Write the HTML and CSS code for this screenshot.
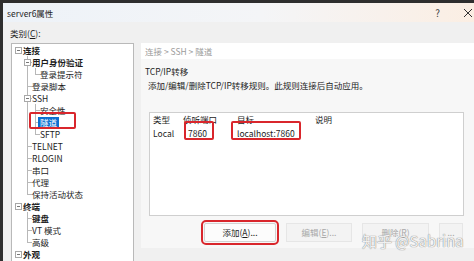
FILE: index.html
```html
<!DOCTYPE html>
<html lang="zh-CN">
<head>
  <meta charset="UTF-8">
  <title>server6属性</title>
  <link rel="stylesheet" href="styles.css">
</head>
<body>
  <div class="dialog">
    <div class="titlebar">
      <span class="title">server6属性</span>
      <span class="help">?</span>
      <span class="close">
        <svg width="10" height="10" viewBox="0 0 10 10"><path d="M1 1L9 9M9 1L1 9" stroke="#333" stroke-width="1" fill="none"/></svg>
      </span>
    </div>

    <div class="main">
      <div class="label">类别(<u>C</u>):</div>

      <div class="tree">
        <div class="row bold"><i class="c0 box"></i><span>连接</span></div>
        <div class="row bold"><i class="c0"></i><i class="c1 t box"></i><span>用户身份验证</span></div>
        <div class="row"><i class="c0"></i><i class="c1 v"></i><i class="c2 l"></i><span>登录提示符</span></div>
        <div class="row"><i class="c0"></i><i class="c1 t"></i><span>登录脚本</span></div>
        <div class="row"><i class="c0"></i><i class="c1 t box"></i><span>SSH</span></div>
        <div class="row"><i class="c0"></i><i class="c1 v"></i><i class="c2 t"></i><span>安全性</span></div>
        <div class="row"><i class="c0"></i><i class="c1 v"></i><i class="c2 t"></i><span class="sel mark-node">隧道</span></div>
        <div class="row"><i class="c0"></i><i class="c1 v"></i><i class="c2 l"></i><span>SFTP</span></div>
        <div class="row"><i class="c0"></i><i class="c1 t"></i><span>TELNET</span></div>
        <div class="row"><i class="c0"></i><i class="c1 t"></i><span>RLOGIN</span></div>
        <div class="row"><i class="c0"></i><i class="c1 t"></i><span>串口</span></div>
        <div class="row"><i class="c0"></i><i class="c1 t"></i><span>代理</span></div>
        <div class="row"><i class="c0"></i><i class="c1 l"></i><span>保持活动状态</span></div>
        <div class="row bold"><i class="c0 box"></i><span>终端</span></div>
        <div class="row bold"><i class="c0"></i><i class="c1 t"></i><span>键盘</span></div>
        <div class="row"><i class="c0"></i><i class="c1 t"></i><span>VT 模式</span></div>
        <div class="row"><i class="c0"></i><i class="c1 l"></i><span>高级</span></div>
        <div class="row bold"><i class="c0 box"></i><span>外观</span></div>
      </div>

      <div class="panel">
        <div class="crumb">连接 &gt; SSH &gt; 隧道</div>
        <div class="sec-title">TCP/IP转移</div>
        <div class="desc">添加/编辑/删除TCP/IP转移规则。此规则连接后自动应用。</div>

        <div class="list">
          <div class="list-row">
            <span>类型</span><span>侦听端口</span><span>目标</span><span>说明</span>
          </div>
          <div class="list-row data">
            <span>Local</span>
            <span class="port"><span class="mark mark-port">7860</span></span>
            <span><span class="mark mark-dest">localhost:7860</span></span>
            <span></span>
          </div>
        </div>

        <div class="buttons">
          <button class="btn mark-btn" style="width:72px">添加(<u>A</u>)...</button>
          <button class="btn off" style="width:66px">编辑(<u>E</u>)...</button>
          <button class="btn off" style="width:67px">删除(<u>R</u>)</button>
          <button class="btn off" style="width:24px">...</button>
        </div>
      </div>
    </div>

    <div class="watermark">知乎 @Sabrina</div>
  </div>
</body>
</html>
```

FILE: styles.css
```css
html, body {
  margin: 0;
  height: 100%;
  overflow: hidden;
}
body {
  background-color: #2e2e2e;
  font-family: "Noto Sans CJK SC", "Noto Sans", sans-serif;
  font-size: 8.5px;
  color: #1c1c1c;
}
.dialog {
  margin: 3px 0 0 3px;
  height: 258px;
  background-color: #f0f0f0;
  position: relative;
  overflow: hidden;
}

/* title bar */
.titlebar {
  height: 19px;
  display: flex;
  align-items: center;
  padding: 0 1px 0 4px;
  background: linear-gradient(90deg, #edf2f8 0%, #f4f5f7 55%, #fbeee3 100%);
}
.help {
  margin-left: auto;
  font-size: 10px;
  color: #444;
}
.close {
  margin-left: 23px;
  display: flex;
}

/* layout */
.main {
  display: grid;
  grid-template-columns: 123px 1fr;
  grid-template-rows: 21px auto;
  column-gap: 7px;
  padding-left: 8px;
}
.label {
  grid-column: 1 / 3;
  padding-top: 5px;
  margin-left: -1px;
  line-height: 12px;
}

/* tree */
.tree {
  --ln: #b8b8b8;
  background-color: #fff;
  border: 1px solid #b9b9b9;
  height: 240px;
}
.row {
  display: flex;
  height: 12px;
  line-height: 12px;
  white-space: nowrap;
}
.row.bold span {
  font-weight: bold;
}
.row i {
  display: block;
  flex: none;
  height: 12px;
}
.c0 { width: 11px; --x: 6px; }
.c1 { width: 9px; --x: 4px; }
.c2 { width: 8px; --x: 3px; }
.v {
  background: linear-gradient(var(--ln), var(--ln)) var(--x) 0 / 1px 100% no-repeat;
}
.t {
  background:
    linear-gradient(var(--ln), var(--ln)) var(--x) 0 / 1px 100% no-repeat,
    linear-gradient(var(--ln), var(--ln)) var(--x) 6px / 100% 1px no-repeat;
}
.l {
  background:
    linear-gradient(var(--ln), var(--ln)) var(--x) 0 / 1px 7px no-repeat,
    linear-gradient(var(--ln), var(--ln)) var(--x) 6px / 100% 1px no-repeat;
}
.box::after {
  content: "";
  display: block;
  width: 5px;
  height: 5px;
  margin-top: 3px;
  border: 1px solid #a8a8a8;
  background: linear-gradient(#777, #777) center / 3px 1px no-repeat, #fff;
}
.c0.box::after { margin-left: 3px; }
.c1.box::after { margin-left: 1px; }
.sel {
  align-self: center;
  height: 10px;
  line-height: 10px;
  margin-left: -2px;
  padding: 0 2px;
  background-color: #0a6fd1;
  color: #fff;
}

/* right panel */
.panel {
  background-color: #f7f7f7;
  height: 205px;
}
.crumb {
  height: 16px;
  line-height: 16px;
  padding-left: 4px;
  background-color: #fff;
  color: #9b9b9b;
}
.sec-title {
  margin: 6px 0 0 4px;
  line-height: 12px;
}
.desc {
  margin: 2px 0 0 7px;
  line-height: 12px;
}
.list {
  margin: 21px 0 0 8px;
  width: 313px;
  height: 102px;
  border: 1px solid #cfcfcf;
  background-color: #fff;
}
.list-row {
  display: grid;
  grid-template-columns: 30px 54px 78px 1fr;
  padding-left: 3px;
  line-height: 12px;
  white-space: nowrap;
}
.list-row.data {
  margin-top: 2px;
}
.port {
  padding-left: 5px;
}
.buttons {
  display: flex;
  justify-content: flex-end;
  gap: 10px;
  margin: 7px 11px 0 0;
}
.btn {
  height: 19px;
  padding: 0;
  box-sizing: border-box;
  border: 1px solid #d2d2d2;
  background-color: #fcfcfc;
  font: inherit;
  color: #1c1c1c;
  line-height: 17px;
}
.btn.off {
  color: #a8a8a8;
  background-color: #f3f3f3;
  border-color: #e6e6e6;
}

/* red annotation boxes */
.mark, .mark-node {
  position: relative;
}
.mark::after, .mark-node::after {
  content: "";
  position: absolute;
  border: 2px solid #d9262c;
  border-radius: 2px;
}
.mark-port::after { inset: -6px -7px -1px -4px; }
.mark-dest::after { inset: -6px -6px -1px -6px; }
.mark-node::after { inset: -5px -17px -2px -9px; }
.mark-btn {
  outline: 2px solid #d9262c;
  outline-offset: 1px;
  border-radius: 2px;
}

.watermark {
  position: absolute;
  left: 359px;
  top: 228px;
  font-size: 15px;
  line-height: 20px;
  color: rgba(255, 255, 255, 0.9);
  text-shadow: 0 0 1px #8a8a8a, 0 0 1px #8a8a8a;
  white-space: nowrap;
}
```
